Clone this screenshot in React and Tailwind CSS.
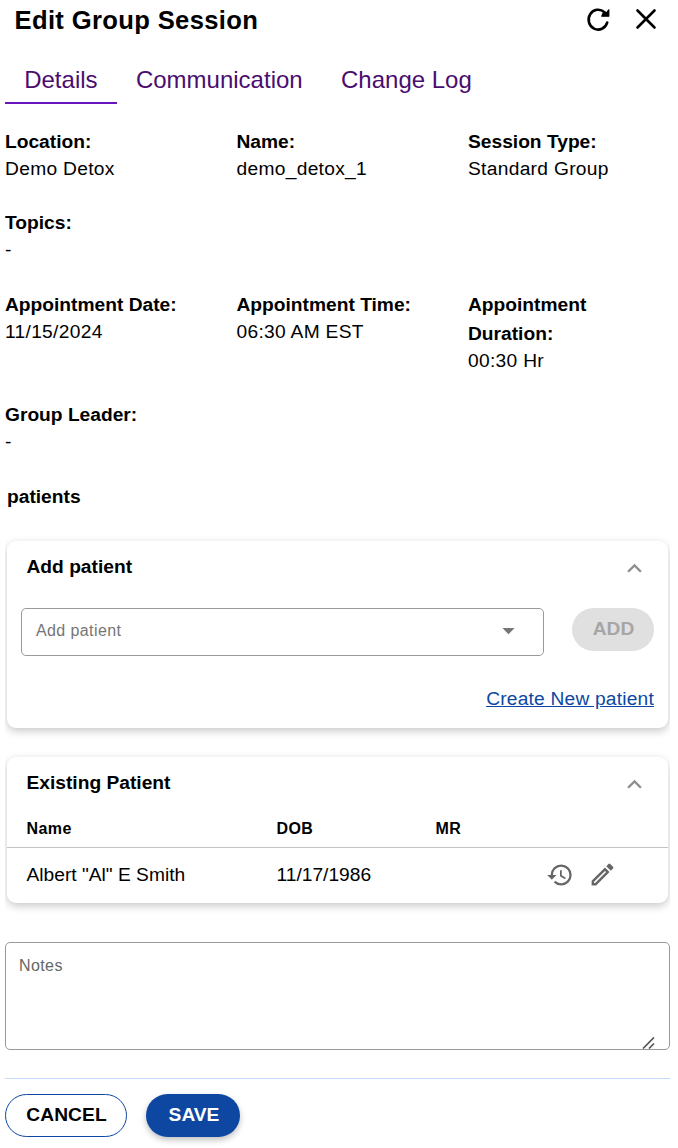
import { useState } from 'react';
import { MdArrowDropDown, MdExpandLess, MdHistory, MdOutlineModeEdit } from 'react-icons/md';

const tabs = ['Details', 'Communication', 'Change Log'];

const sessionRows = [
    [
        { label: 'Location:', value: 'Demo Detox' },
        { label: 'Name:', value: 'demo_detox_1' },
        { label: 'Session Type:', value: 'Standard Group' },
    ],
    [{ label: 'Topics:', value: '-' }],
    [
        { label: 'Appointment Date:', value: '11/15/2024' },
        { label: 'Appointment Time:', value: '06:30 AM EST' },
        { label: 'Appointment Duration:', value: '00:30 Hr' },
    ],
    [{ label: 'Group Leader:', value: '-' }],
];

const patients = [{ name: 'Albert "Al" E Smith', dob: '11/17/1986', mr: '' }];

const ReloadIcon = () => (
    <svg width="26" height="26" viewBox="0 0 26 26" fill="none" stroke="currentColor" strokeWidth="2.6" strokeLinecap="round">
        <path d="M22.2 16.6A9.5 9.9 0 1 1 19.4 6.2L20.6 7.4" />
        <path d="M23.8 3.8V10.2h-7l1-2.6h3z" fill="currentColor" strokeWidth="1.2" strokeLinejoin="round" />
    </svg>
);

const Field = ({ label, value }) => (
    <div>
        <p className="font-bold leading-[29px]">{label}</p>
        <p className="leading-[25px] tracking-[0.3px]">{value}</p>
    </div>
);

// ─────────────────────────────────────────────
// Collapsible card
// ─────────────────────────────────────────────
const Panel = ({ title, className, children }) => {
    const [open, setOpen] = useState(true);

    return (
        <div className="overflow-x-clip px-[2px]">
            <section className={`rounded-[9px] bg-white shadow-[0_3px_9px_rgba(0,0,0,0.22)] ${className}`}>
                <button
                    onClick={() => setOpen(!open)}
                    className="flex h-[52px] w-full items-center justify-between pr-[19px] pl-[19.5px]"
                >
                    <span className="pt-px font-bold">{title}</span>
                    <MdExpandLess size={29} className={`mt-1 text-[#8c8c8c] ${open ? '' : 'rotate-180'}`} />
                </button>
                {open && children}
            </section>
        </div>
    );
};

const App = () => {
    const [activeTab, setActiveTab] = useState('Details');
    const [notes, setNotes] = useState('');

    return (
        <div className="h-[1148px] w-[678px] overflow-hidden bg-white pr-2 pl-[5px] font-['Liberation_Sans',Arial,sans-serif] text-[19.2px] text-black">
            {/* Header */}
            <header className="flex h-[40px] items-center justify-between pr-[13px] pl-[9.5px]">
                <h1 className="pt-px text-[25.6px] font-bold tracking-[0.35px]">Edit Group Session</h1>
                <div className="flex items-center gap-6 pb-[3px]">
                    <button aria-label="Reload">
                        <ReloadIcon />
                    </button>
                    <button aria-label="Close">
                        <svg width="22" height="22" viewBox="0 0 22 22" stroke="currentColor" strokeWidth="2.6" strokeLinecap="round">
                            <path d="M2.5 2.5l17 17M19.5 2.5l-17 17" />
                        </svg>
                    </button>
                </div>
            </header>

            {/* Tabs */}
            <nav className="mt-[16px] flex h-[48px] text-2xl text-[#4a0d70]">
                {tabs.map(tab => (
                    <button
                        key={tab}
                        onClick={() => setActiveTab(tab)}
                        className={`border-b-2 px-[19.2px] pt-[2px] ${activeTab === tab ? 'border-[#6a14bd]' : 'border-transparent'}`}
                    >
                        {tab}
                    </button>
                ))}
            </nav>

            {/* Session details */}
            <div className="mt-[23px] flex flex-col gap-[27.3px]">
                {sessionRows.map(row => (
                    <div key={row[0].label} className="grid grid-cols-[231.5px_231.5px_1fr]">
                        {row.map(field => (
                            <Field key={field.label} {...field} />
                        ))}
                    </div>
                ))}
            </div>

            <h2 className="mt-[28.1px] mb-[30px] pl-[2px] leading-[29px] font-bold">patients</h2>

            <Panel title="Add patient" className="h-[187px]">
                <div className="mt-[15px] flex items-start justify-between pr-[14px] pl-[14px]">
                    <div className="flex h-[48px] w-[523px] items-center justify-between rounded-[5px] border border-[#999] pr-5 pb-px pl-[14px] text-base tracking-[0.4px] text-[#757575]">
                        <span>Add patient</span>
                        <MdArrowDropDown size={29} className="mb-[2px]" />
                    </div>
                    <button className="h-[43px] w-[82px] rounded-full bg-[#e0e0e0] pl-px font-bold text-[#a6a6a6]">
                        ADD
                    </button>
                </div>
                <div className="mt-[29px] pr-[14px] text-right">
                    <a href="#" className="tracking-[0.2px] text-[#0d47a1] underline">
                        Create New patient
                    </a>
                </div>
            </Panel>

            <Panel title="Existing Patient" className="mt-[29px] h-[146px]">
                <div className="grid h-[39px] grid-cols-[250px_159px_1fr] items-center border-b border-[#c4c4c4] pt-[2px] pl-[19.5px] text-base font-bold tracking-[0.4px]">
                    <span>Name</span>
                    <span>DOB</span>
                    <span>MR</span>
                </div>
                {patients.map(patient => (
                    <div key={patient.name} className="grid h-[54px] grid-cols-[250px_159px_110.5px_1fr] items-center pl-[19.5px]">
                        <span>{patient.name}</span>
                        <span className="pt-px">{patient.dob}</span>
                        <span>{patient.mr}</span>
                        <div className="flex items-center gap-[14px] text-[#666]">
                            <MdHistory size={28} className="mt-px" />
                            <MdOutlineModeEdit size={29} />
                        </div>
                    </div>
                ))}
            </Panel>

            {/* Notes */}
            <div className="relative mt-[39px] h-[108px]">
                <textarea
                    value={notes}
                    onChange={e => setNotes(e.target.value)}
                    placeholder="Notes"
                    className="block h-full w-full resize-none rounded-[5px] border border-[#999] px-[13px] py-[11px] text-base tracking-[0.4px] outline-none placeholder:text-[#666]"
                />
                <svg className="absolute right-[15px] bottom-[1px]" width="13" height="12" viewBox="0 0 13 12" stroke="#555" strokeWidth="1.7">
                    <path d="M1 11.5L12 .5M7 11.5L12 6.5" />
                </svg>
            </div>

            {/* Actions */}
            <footer className="mt-[28px] flex gap-[19px] border-t border-[#c5dcfa] pt-[15px] font-bold">
                <button className="h-[43px] w-[122px] rounded-full border border-[#0d47a1] pl-px tracking-[0.1px]">CANCEL</button>
                <button className="h-[43px] w-[94px] rounded-full bg-[#0d47a1] pl-[2px] text-white shadow-[0_3px_6px_rgba(0,0,0,0.25)]">
                    SAVE
                </button>
            </footer>
        </div>
    );
};

export default App;
